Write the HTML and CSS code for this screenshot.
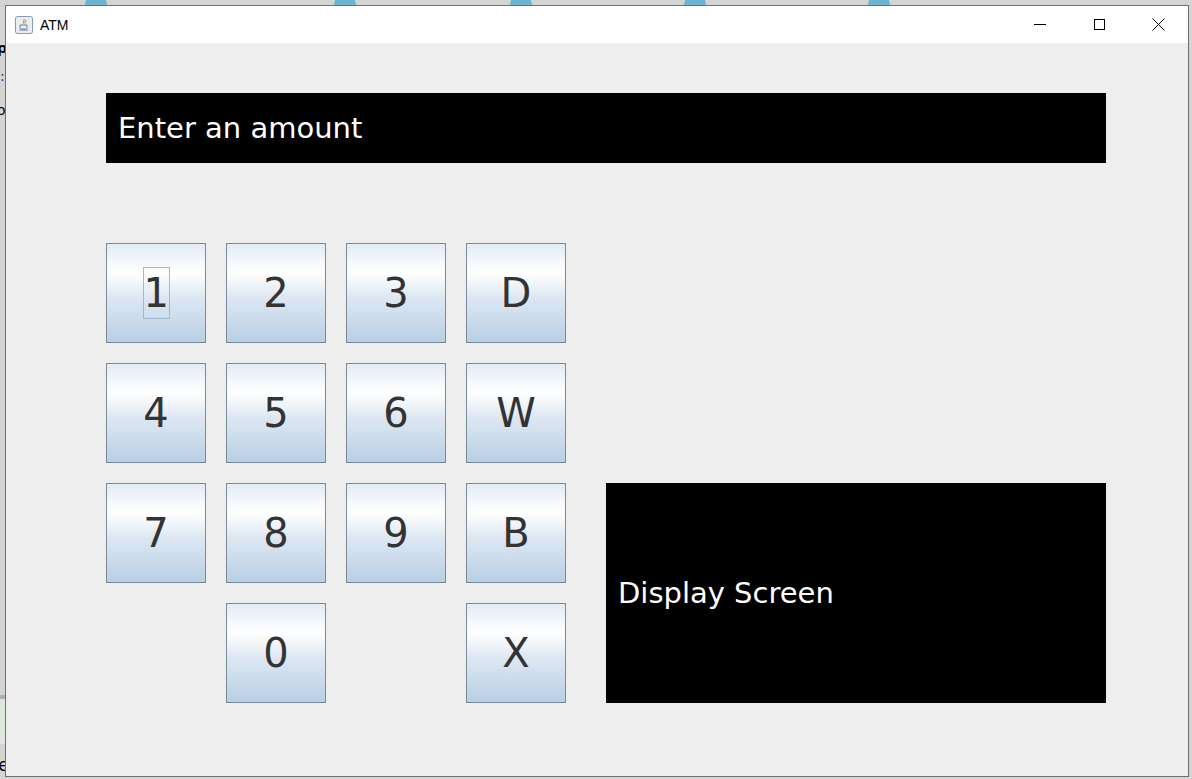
FILE: index.html
```html
<!DOCTYPE html>
<html>
	<head>
		<title>ATM</title>
		<link rel="stylesheet" href="styles.css">
	</head>
	<body>
		<div class="desktop">
			<div class="tab-dot dot1"></div>
			<div class="tab-dot dot2"></div>
			<div class="tab-dot dot3"></div>
			<div class="tab-dot dot4"></div>
			<div class="tab-dot dot5"></div>
			<span class="peek peek-p">p</span>
			<span class="peek peek-s">:</span>
			<span class="peek peek-o">o</span>
			<span class="peek peek-e">e</span>
			<div class="peek-row"></div>
		</div>
		<div class="window">
			<div class="titlebar">
				<svg class="app-icon" width="18" height="18" viewBox="0 0 18 18">
					<rect x="0.5" y="0.5" width="17" height="17" rx="2" fill="#e9eef4" stroke="#7f9bb5"/>
					<path d="M9 3c1 1.500-1.500 2.500-.5 4.500M11 4c.5 1.500-1.500 2-1 3.500" fill="none" stroke="#e2873a" stroke-width="1.200"/>
					<path d="M5 9h7v2.500c0 1-1 1.500-2 1.500H7c-1 0-2-.5-2-1.500zM4 14h9" fill="none" stroke="#6d8196"/>
				</svg>
				<span class="app-title">ATM</span>
				<div class="window-controls">
					<svg width="13" height="13" viewBox="0 0 13 13"><path d="M0 6.500h12" stroke="#000"/></svg>
					<svg width="13" height="13" viewBox="0 0 13 13"><rect x="1.500" y="1.500" width="10" height="10" fill="none" stroke="#000"/></svg>
					<svg width="13" height="13" viewBox="0 0 13 13"><path d="M0.500 0.500l12 12M12.500 0.500l-12 12" stroke="#000"/></svg>
				</div>
			</div>
			<div class="content">
				<div class="prompt">Enter an amount</div>
				<div class="lower">
					<div class="keypad">
						<button class="key"><span class="focus">1</span></button>
						<button class="key">2</button>
						<button class="key">3</button>
						<button class="key">D</button>
						<button class="key">4</button>
						<button class="key">5</button>
						<button class="key">6</button>
						<button class="key">W</button>
						<button class="key">7</button>
						<button class="key">8</button>
						<button class="key">9</button>
						<button class="key">B</button>
						<button class="key zero">0</button>
						<button class="key exit">X</button>
					</div>
					<div class="screen">Display Screen</div>
				</div>
			</div>
		</div>
	</body>
</html>
```

FILE: styles.css
```css
html, body {
	margin: 0;
	height: 100%;
	overflow: hidden;
}
body {
	position: relative;
	width: 1192px;
	height: 779px;
	background: #d4d4d4;
	font-family: "DejaVu Sans", sans-serif;
}

/* what shows of the desktop round the window */
.desktop {
	position: absolute;
	inset: 0;
	overflow: hidden;
}
.tab-dot {
	position: absolute;
	top: -6px;
	width: 22px;
	height: 22px;
	border-radius: 50%;
	background: #6db3d2;
}
.dot1 { left: 85px; }
.dot2 { left: 334px; }
.dot3 { left: 510px; }
.dot4 { left: 684px; }
.dot5 { left: 868px; }
.peek {
	position: absolute;
	left: -3px;
	font-size: 14px;
	color: #000;
}
.peek-p { top: 40px; font-weight: bold; }
.peek-s { top: 68px; left: 0; color: #303080; }
.peek-o { top: 102px; }
.peek-e { top: 754px; left: -2px; font-size: 18px; }
.peek-row {
	position: absolute;
	left: 0;
	top: 695px;
	width: 6px;
	height: 45px;
	background: #dfe8df;
	border-top: 4px solid #a8b0bc;
}

.window {
	position: absolute;
	left: 5px;
	top: 5px;
	width: 1182px;
	height: 770px;
	border: 1px solid #6f6f6f;
	display: flex;
	flex-direction: column;
	background: #eeeeee;
}
.titlebar {
	display: flex;
	align-items: center;
	height: 37px;
	padding-left: 9px;
	background: #fff;
	flex: none;
}
.app-icon {
	flex: none;
}
.app-title {
	margin-left: 7px;
	font-family: "Liberation Sans", sans-serif;
	font-size: 14px;
	color: #000;
}
.window-controls {
	display: flex;
	gap: 46px;
	margin-left: auto;
	margin-right: 23px;
}

.content {
	display: flex;
	flex-direction: column;
	padding: 50px 82px 0 100px;
}
.prompt {
	display: flex;
	align-items: center;
	height: 70px;
	padding-left: 12px;
	background: #000;
	color: #fff;
	font-size: 29px;
}
.lower {
	display: flex;
	align-items: flex-end;
	gap: 40px;
	margin-top: 80px;
}
.keypad {
	display: grid;
	grid-template-columns: repeat(4, 100px);
	grid-auto-rows: 100px;
	gap: 20px;
}
.key {
	padding: 0;
	margin: 0;
	box-sizing: border-box;
	border: 1px solid #7a8a99;
	background: linear-gradient(#e3ebf5 0%, #ffffff 30%, #dde7f2 55%, #b8cfe5 100%);
	color: #333333;
	font-family: "DejaVu Sans", sans-serif;
	font-size: 40px;
	display: flex;
	align-items: center;
	justify-content: center;
}
.zero { grid-column: 2; }
.exit { grid-column: 4; }
.focus {
	display: block;
	width: 25px;
	height: 50px;
	line-height: 50px;
	border: 1px solid #a3b8cc;
	text-align: center;
}
.screen {
	display: flex;
	align-items: center;
	width: 500px;
	height: 220px;
	padding-left: 12px;
	box-sizing: border-box;
	background: #000;
	color: #fff;
	font-size: 29px;
}
```
